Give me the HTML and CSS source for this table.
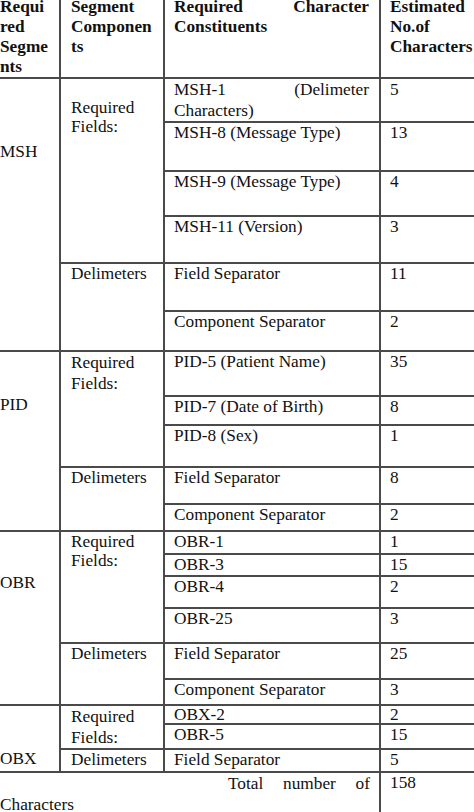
FILE: index.html
```html
<!DOCTYPE html>
<html lang="en">
<head>
<meta charset="utf-8">
<title>HL7 segment character estimate</title>
<link rel="stylesheet" href="styles.css">
</head>
<body>
<table class="seg-table">
  <colgroup>
    <col class="c-seg">
    <col class="c-comp">
    <col class="c-const">
    <col class="c-num">
  </colgroup>
  <thead>
    <tr class="r-head">
      <th class="first">Required Segments</th>
      <th>Segment Components</th>
      <th>Required Character Constituents</th>
      <th>Estimated No.of Characters</th>
    </tr>
  </thead>
  <tbody>
    <tr class="r-43">
      <td class="first seg seg-msh" rowspan="6">MSH</td>
      <td class="comp comp-msh" rowspan="4">Required Fields:</td>
      <td class="wide">MSH-1 (Delimeter Characters)</td>
      <td class="wide">5</td>
    </tr>
    <tr class="r-49"><td>MSH-8 (Message Type)</td><td>13</td></tr>
    <tr class="r-45"><td>MSH-9 (Message Type)</td><td>4</td></tr>
    <tr class="r-47"><td>MSH-11 (Version)</td><td>3</td></tr>
    <tr class="r-48">
      <td class="comp" rowspan="2">Delimeters</td>
      <td>Field Separator</td><td>11</td>
    </tr>
    <tr class="r-40"><td>Component Separator</td><td>2</td></tr>

    <tr class="r-45">
      <td class="first seg seg-pid" rowspan="5">PID</td>
      <td class="comp comp-wide" rowspan="3">Required Fields:</td>
      <td>PID-5 (Patient Name)</td><td>35</td>
    </tr>
    <tr class="r-29"><td>PID-7 (Date of Birth)</td><td>8</td></tr>
    <tr class="r-42"><td>PID-8 (Sex)</td><td>1</td></tr>
    <tr class="r-37">
      <td class="comp" rowspan="2">Delimeters</td>
      <td>Field Separator</td><td>8</td>
    </tr>
    <tr class="r-27"><td>Component Separator</td><td>2</td></tr>

    <tr class="r-23">
      <td class="first seg seg-obr" rowspan="6">OBR</td>
      <td class="comp" rowspan="4">Required Fields:</td>
      <td>OBR-1</td><td>1</td>
    </tr>
    <tr class="r-22"><td>OBR-3</td><td>15</td></tr>
    <tr class="r-32"><td>OBR-4</td><td>2</td></tr>
    <tr class="r-35"><td>OBR-25</td><td>3</td></tr>
    <tr class="r-36">
      <td class="comp" rowspan="2">Delimeters</td>
      <td>Field Separator</td><td>25</td>
    </tr>
    <tr class="r-26"><td>Component Separator</td><td>3</td></tr>

    <tr class="r-19">
      <td class="first seg seg-obx" rowspan="3">OBX</td>
      <td class="comp comp-wide" rowspan="2">Required Fields:</td>
      <td class="tight">OBX-2</td><td class="tight">2</td>
    </tr>
    <tr class="r-24"><td>OBR-5</td><td>15</td></tr>
    <tr class="r-23">
      <td class="comp">Delimeters</td>
      <td>Field Separator</td><td>5</td>
    </tr>

    <tr class="r-total">
      <td class="first total" colspan="3">Total number of Characters</td>
      <td>158</td>
    </tr>
  </tbody>
</table>
</body>
</html>
```

FILE: styles.css
```css
html, body {
  margin: 0;
  padding: 0;
  background: #ffffff;
}

body {
  width: 474px;
  height: 812px;
  overflow: hidden;
}

.seg-table {
  margin-top: -3px;
  border-collapse: collapse;
  table-layout: fixed;
  width: 490px;
  font-family: "Liberation Serif", "Times New Roman", serif;
  font-size: 17.3px;
  color: #111111;
  text-align: justify;
}

.c-seg { width: 60px; }
.c-comp { width: 104px; }
.c-const { width: 216px; }
.c-num { width: 110px; }

.seg-table th,
.seg-table td {
  border: 2px solid #4a4a4a;
  padding: 0 10px 0 9px;
  vertical-align: top;
  line-height: 19px;
  font-weight: normal;
}

.seg-table tr > :last-child {
  border-right: none;
}

.seg-table th {
  font-weight: bold;
  line-height: 20px;
  border-top: none;
  overflow-wrap: anywhere;
}

.seg-table .first {
  border-left: none;
  padding-left: 0;
  padding-right: 9px;
}

.seg-table th:nth-child(2) {
  padding-left: 10px;
  padding-right: 8px;
}

.seg-table .comp {
  padding-left: 10px;
  padding-right: 8px;
}

.r-head { height: 81px; }
.r-19 { height: 19px; }
.r-22 { height: 22px; }
.r-23 { height: 23px; }
.r-24 { height: 24px; }
.r-26 { height: 26px; }
.r-27 { height: 27px; }
.r-29 { height: 29px; }
.r-32 { height: 32px; }
.r-35 { height: 35px; }
.r-36 { height: 36px; }
.r-37 { height: 37px; }
.r-40 { height: 40px; }
.r-42 { height: 42px; }
.r-43 { height: 43px; }
.r-45 { height: 45px; }
.r-47 { height: 47px; }
.r-48 { height: 48px; }
.r-49 { height: 49px; }
.r-total { height: 60px; }

.seg-table .wide { line-height: 21px; }
.seg-table .tight { line-height: 17px; }

.seg-table td.seg-msh { padding-top: 63px; }
.seg-table td.seg-pid { padding-top: 43px; }
.seg-table td.seg-obr { padding-top: 41px; }
.seg-table td.seg-obx { padding-top: 43px; }

.seg-table td.comp-msh { padding-top: 19px; line-height: 19px; }
.seg-table .comp-wide { line-height: 21px; }

.seg-table td.total {
  text-indent: 228px;
  line-height: 21px;
}

.seg-table .r-total td { border-bottom: none; }
```
